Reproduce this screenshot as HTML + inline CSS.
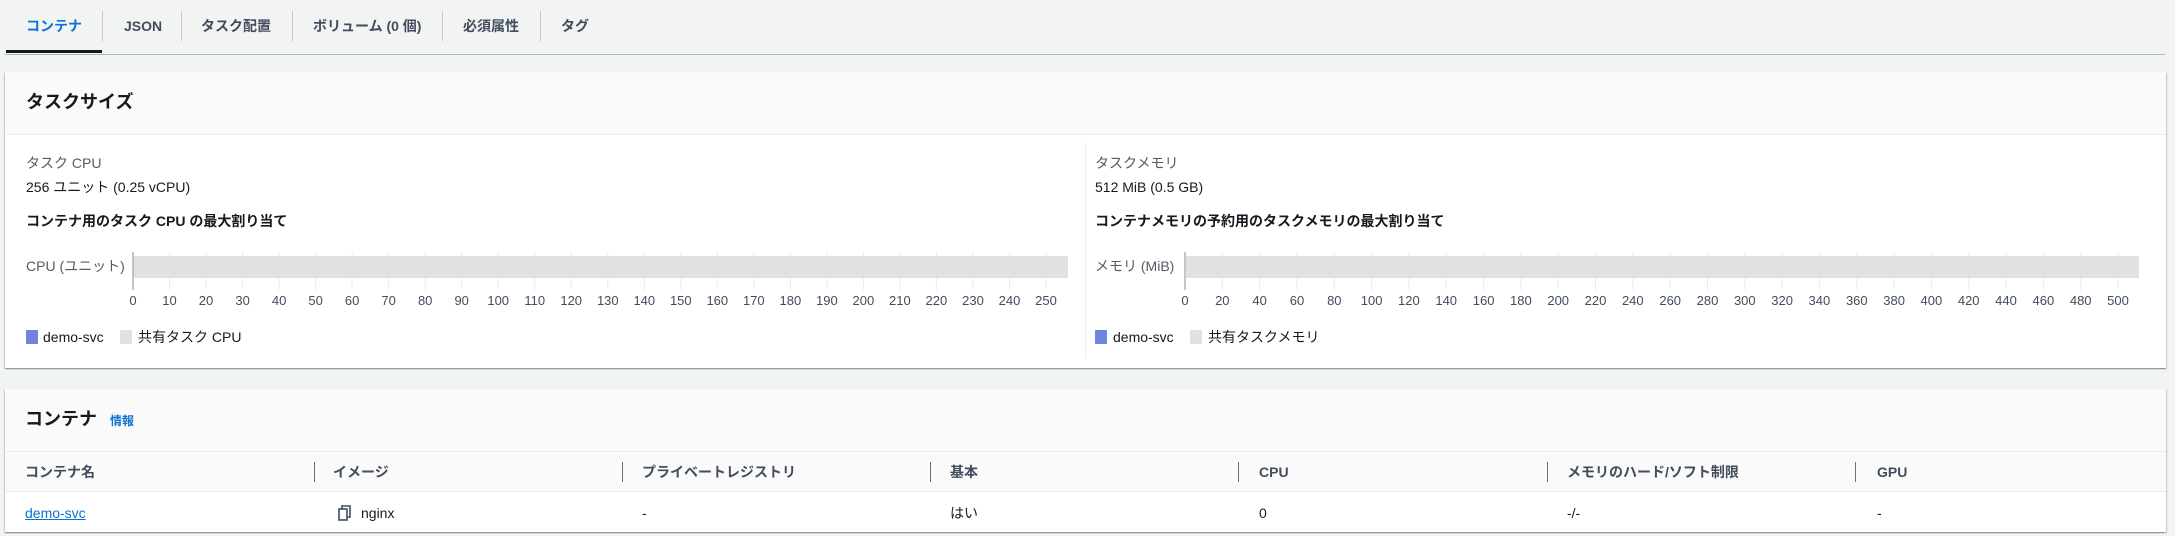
<!DOCTYPE html>
<html><head><meta charset="utf-8"><style>
*{box-sizing:border-box;margin:0;padding:0}
body{width:2175px;height:536px;background:#f2f3f3;font-family:"Liberation Sans","Noto Sans CJK JP",sans-serif;color:#16191f;position:relative;overflow:hidden;font-size:14px}
.a{position:absolute;white-space:nowrap}
.tab{position:absolute;top:17px;font-size:14px;font-weight:bold;color:#414d5c;line-height:18px}
.sep{position:absolute;top:11px;width:1px;height:30px;background:#c6c6cd}
.panel{position:absolute;left:5px;width:2161px;background:#fff;box-shadow:0 1px 1px rgba(0,28,36,.3),1px 1px 1px rgba(0,28,36,.15),-1px 1px 1px rgba(0,28,36,.15)}
.hdr{position:absolute;left:0;top:0;width:100%;background:#fafafa;border-bottom:1px solid #eaeded}
.lbl{color:#545b64}
.th{position:absolute;top:463px;font-size:14px;font-weight:bold;color:#414d5c;line-height:18px}
.cs{position:absolute;top:462px;width:1px;height:20px;background:#687078}
.td{position:absolute;top:504px;font-size:14px;line-height:18px}
</style></head><body>
<div class="tab" style="left:26px;color:#0972d3">コンテナ</div>
<div style="position:absolute;left:6px;top:50px;width:96px;height:3px;background:#16191f"></div>
<div class="sep" style="left:102px"></div>
<div class="tab" style="left:124px">JSON</div>
<div class="sep" style="left:181px"></div>
<div class="tab" style="left:201px">タスク配置</div>
<div class="sep" style="left:292px"></div>
<div class="tab" style="left:313px">ボリューム (0 個)</div>
<div class="sep" style="left:442px"></div>
<div class="tab" style="left:463px">必須属性</div>
<div class="sep" style="left:540px"></div>
<div class="tab" style="left:561px">タグ</div>
<div style="position:absolute;left:5px;top:54px;width:2160px;height:1px;background:#aab7b8"></div>

<div class="panel" style="top:72px;height:296px">
  <div class="hdr" style="height:63px"></div>
  <div class="a" style="left:21px;top:18px;font-size:18px;font-weight:bold;line-height:24px">タスクサイズ</div>
  <div style="position:absolute;left:1080px;top:70px;width:1px;height:216px;background:#eaeded"></div>
</div>
<div class="a lbl" style="left:26px;top:154px;line-height:18px">タスク CPU</div>
<div class="a" style="left:26px;top:178px;line-height:18px">256 ユニット (0.25 vCPU)</div>
<div class="a" style="left:26px;top:212px;font-weight:bold;line-height:18px">コンテナ用のタスク CPU の最大割り当て</div>
<div class="a lbl" style="left:26px;top:257px;line-height:18px">CPU (ユニット)</div>
<div class="a lbl" style="left:1095px;top:154px;line-height:18px">タスクメモリ</div>
<div class="a" style="left:1095px;top:178px;line-height:18px">512 MiB (0.5 GB)</div>
<div class="a" style="left:1095px;top:212px;font-weight:bold;line-height:18px">コンテナメモリの予約用のタスクメモリの最大割り当て</div>
<div class="a lbl" style="left:1095px;top:257px;line-height:18px">メモリ (MiB)</div>

<svg class="a" style="left:0;top:0" width="2175" height="536" font-family="Liberation Sans, Noto Sans CJK JP, sans-serif" font-size="13" fill="#414d5c">
<g stroke="#e9ebed" stroke-width="1">
<path d="M169.5 252V290M206 252V290M242.6 252V290M279.1 252V290M315.6 252V290M352.1 252V290M388.6 252V290M425.2 252V290M461.7 252V290M498.2 252V290M534.7 252V290M571.2 252V290M607.8 252V290M644.3 252V290M680.8 252V290M717.3 252V290M753.8 252V290M790.4 252V290M826.9 252V290M863.4 252V290M899.9 252V290M936.4 252V290M973 252V290M1009.5 252V290M1046 252V290"/>
<path d="M1222.3 252V290M1259.6 252V290M1297 252V290M1334.3 252V290M1371.6 252V290M1408.9 252V290M1446.2 252V290M1483.6 252V290M1520.9 252V290M1558.2 252V290M1595.5 252V290M1632.8 252V290M1670.2 252V290M1707.5 252V290M1744.8 252V290M1782.1 252V290M1819.4 252V290M1856.8 252V290M1894.1 252V290M1931.4 252V290M1968.7 252V290M2006 252V290M2043.4 252V290M2080.7 252V290M2118 252V290"/>
</g>
<rect x="133" y="256" width="935" height="22" fill="#e1e1e1"/>
<rect x="1186" y="256" width="953" height="22" fill="#e1e1e1"/>
<path d="M133 252V290M1185 252V290" stroke="#aab7b8" stroke-width="1.5"/>
<g text-anchor="middle">
<text x="133" y="305">0</text><text x="169.5" y="305">10</text><text x="206" y="305">20</text><text x="242.6" y="305">30</text><text x="279.1" y="305">40</text><text x="315.6" y="305">50</text><text x="352.1" y="305">60</text><text x="388.6" y="305">70</text><text x="425.2" y="305">80</text><text x="461.7" y="305">90</text><text x="498.2" y="305">100</text><text x="534.7" y="305">110</text><text x="571.2" y="305">120</text><text x="607.8" y="305">130</text><text x="644.3" y="305">140</text><text x="680.8" y="305">150</text><text x="717.3" y="305">160</text><text x="753.8" y="305">170</text><text x="790.4" y="305">180</text><text x="826.9" y="305">190</text><text x="863.4" y="305">200</text><text x="899.9" y="305">210</text><text x="936.4" y="305">220</text><text x="973" y="305">230</text><text x="1009.5" y="305">240</text><text x="1046" y="305">250</text>
<text x="1185" y="305">0</text><text x="1222.3" y="305">20</text><text x="1259.6" y="305">40</text><text x="1297" y="305">60</text><text x="1334.3" y="305">80</text><text x="1371.6" y="305">100</text><text x="1408.9" y="305">120</text><text x="1446.2" y="305">140</text><text x="1483.6" y="305">160</text><text x="1520.9" y="305">180</text><text x="1558.2" y="305">200</text><text x="1595.5" y="305">220</text><text x="1632.8" y="305">240</text><text x="1670.2" y="305">260</text><text x="1707.5" y="305">280</text><text x="1744.8" y="305">300</text><text x="1782.1" y="305">320</text><text x="1819.4" y="305">340</text><text x="1856.8" y="305">360</text><text x="1894.1" y="305">380</text><text x="1931.4" y="305">400</text><text x="1968.7" y="305">420</text><text x="2006" y="305">440</text><text x="2043.4" y="305">460</text><text x="2080.7" y="305">480</text><text x="2118" y="305">500</text>
</g>
<rect x="26" y="330" width="12" height="14" rx="1" fill="#6f83e0"/>
<rect x="120" y="330" width="12" height="14" rx="1" fill="#e1e1e1"/>
<rect x="1095" y="330" width="12" height="14" rx="1" fill="#6f83e0"/>
<rect x="1190" y="330" width="12" height="14" rx="1" fill="#e1e1e1"/>
</svg>
<div class="a" style="left:43px;top:328px;line-height:18px">demo-svc</div>
<div class="a" style="left:138px;top:328px;line-height:18px">共有タスク CPU</div>
<div class="a" style="left:1113px;top:328px;line-height:18px">demo-svc</div>
<div class="a" style="left:1208px;top:328px;line-height:18px">共有タスクメモリ</div>

<div class="panel" style="top:389px;height:143px">
  <div class="hdr" style="height:63px"></div>
  <div style="position:absolute;left:0;top:63px;width:100%;height:40px;background:#fafafa;border-bottom:1px solid #eaeded"></div>
</div>
<div class="a" style="left:25px;top:407px;font-size:18px;font-weight:bold;line-height:24px">コンテナ</div>
<div class="a" style="left:110px;top:413px;font-size:12px;font-weight:bold;color:#0972d3;line-height:16px">情報</div>

<div class="th" style="left:25px">コンテナ名</div>
<div class="cs" style="left:314px"></div><div class="th" style="left:333px">イメージ</div>
<div class="cs" style="left:622px"></div><div class="th" style="left:642px">プライベートレジストリ</div>
<div class="cs" style="left:930px"></div><div class="th" style="left:950px">基本</div>
<div class="cs" style="left:1238px"></div><div class="th" style="left:1259px">CPU</div>
<div class="cs" style="left:1547px"></div><div class="th" style="left:1567px">メモリのハード/ソフト制限</div>
<div class="cs" style="left:1855px"></div><div class="th" style="left:1877px">GPU</div>

<div class="td" style="left:25px;color:#0972d3;text-decoration:underline">demo-svc</div>
<svg class="a" style="left:338px;top:505px" width="14" height="16" viewBox="0 0 14 16"><rect x="1" y="4" width="8" height="11" fill="none" stroke="#414d5c" stroke-width="1.6"/><path d="M4 4V1H12V12H9" fill="none" stroke="#414d5c" stroke-width="1.6"/></svg>
<div class="td" style="left:361px">nginx</div>
<div class="td" style="left:642px">-</div>
<div class="td" style="left:950px">はい</div>
<div class="td" style="left:1259px">0</div>
<div class="td" style="left:1567px">-/-</div>
<div class="td" style="left:1877px">-</div>
</body></html>
